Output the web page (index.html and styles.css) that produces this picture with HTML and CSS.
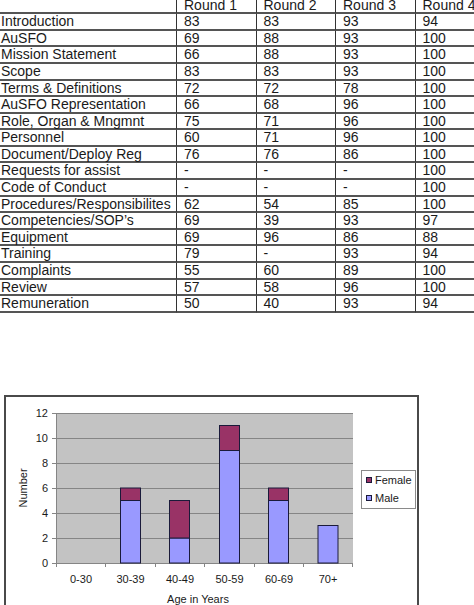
FILE: index.html
```html
<!DOCTYPE html>
<html lang="en">
<head>
    <meta charset="UTF-8">
    <meta name="viewport" content="width=device-width, initial-scale=1.0">
    <title>Review Scores and Age Profile</title>
    <link rel="stylesheet" href="styles.css">
</head>
<body>
    <!-- Scores by round -->
    <table class="scores">
        <colgroup>
            <col class="col-topic">
            <col class="col-round">
            <col class="col-round">
            <col class="col-round">
            <col class="col-round">
        </colgroup>
        <thead>
            <tr><th></th><th>Round 1</th><th>Round 2</th><th>Round 3</th><th>Round 4</th></tr>
        </thead>
        <tbody>
            <tr><td>Introduction</td><td>83</td><td>83</td><td>93</td><td>94</td></tr>
            <tr><td>AuSFO</td><td>69</td><td>88</td><td>93</td><td>100</td></tr>
            <tr><td>Mission Statement</td><td>66</td><td>88</td><td>93</td><td>100</td></tr>
            <tr><td>Scope</td><td>83</td><td>83</td><td>93</td><td>100</td></tr>
            <tr><td>Terms &amp; Definitions</td><td>72</td><td>72</td><td>78</td><td>100</td></tr>
            <tr><td>AuSFO Representation</td><td>66</td><td>68</td><td>96</td><td>100</td></tr>
            <tr><td>Role, Organ &amp; Mngmnt</td><td>75</td><td>71</td><td>96</td><td>100</td></tr>
            <tr><td>Personnel</td><td>60</td><td>71</td><td>96</td><td>100</td></tr>
            <tr><td>Document/Deploy Reg</td><td>76</td><td>76</td><td>86</td><td>100</td></tr>
            <tr><td>Requests for assist</td><td>-</td><td>-</td><td>-</td><td>100</td></tr>
            <tr><td>Code of Conduct</td><td>-</td><td>-</td><td>-</td><td>100</td></tr>
            <tr><td>Procedures/Responsibilites</td><td>62</td><td>54</td><td>85</td><td>100</td></tr>
            <tr><td>Competencies/SOP’s</td><td>69</td><td>39</td><td>93</td><td>97</td></tr>
            <tr><td>Equipment</td><td>69</td><td>96</td><td>86</td><td>88</td></tr>
            <tr><td>Training</td><td>79</td><td>-</td><td>93</td><td>94</td></tr>
            <tr><td>Complaints</td><td>55</td><td>60</td><td>89</td><td>100</td></tr>
            <tr><td>Review</td><td>57</td><td>58</td><td>96</td><td>100</td></tr>
            <tr><td>Remuneration</td><td>50</td><td>40</td><td>93</td><td>94</td></tr>
        </tbody>
    </table>

    <!-- Age chart -->
    <div class="chart">
        <svg width="416" height="210" viewBox="4 395 416 210">
            <rect class="frame" x="5" y="396" width="413" height="240"/>

            <rect class="plot" x="56" y="413" width="297" height="150"/>
            <g class="grid">
                <line x1="52" y1="413.5" x2="353" y2="413.5"/>
                <line x1="52" y1="438.5" x2="353" y2="438.5"/>
                <line x1="52" y1="463.5" x2="353" y2="463.5"/>
                <line x1="52" y1="488.5" x2="353" y2="488.5"/>
                <line x1="52" y1="513.5" x2="353" y2="513.5"/>
                <line x1="52" y1="538.5" x2="353" y2="538.5"/>
                <line x1="52" y1="563.5" x2="353" y2="563.5"/>
                <line x1="56.5" y1="413" x2="56.5" y2="567"/>
                <line x1="105.5" y1="563" x2="105.5" y2="567"/>
                <line x1="155.5" y1="563" x2="155.5" y2="567"/>
                <line x1="204.5" y1="563" x2="204.5" y2="567"/>
                <line x1="254.5" y1="563" x2="254.5" y2="567"/>
                <line x1="303.5" y1="563" x2="303.5" y2="567"/>
                <line x1="352.5" y1="563" x2="352.5" y2="567"/>
            </g>

            <g class="bars">
                <rect class="male" x="120.5" y="500.5" width="20" height="62.5"/>
                <rect class="female" x="120.5" y="488" width="20" height="12.5"/>
                <rect class="male" x="169.5" y="538" width="20" height="25"/>
                <rect class="female" x="169.5" y="500.5" width="20" height="37.5"/>
                <rect class="male" x="219.5" y="450.5" width="20" height="112.5"/>
                <rect class="female" x="219.5" y="425.5" width="20" height="25"/>
                <rect class="male" x="268.5" y="500.5" width="20" height="62.5"/>
                <rect class="female" x="268.5" y="488" width="20" height="12.5"/>
                <rect class="male" x="318" y="525.5" width="20" height="37.5"/>
            </g>

            <g class="labels">
                <text x="48" y="417" text-anchor="end">12</text>
                <text x="48" y="442" text-anchor="end">10</text>
                <text x="48" y="467" text-anchor="end">8</text>
                <text x="48" y="492" text-anchor="end">6</text>
                <text x="48" y="517" text-anchor="end">4</text>
                <text x="48" y="542" text-anchor="end">2</text>
                <text x="48" y="567" text-anchor="end">0</text>

                <text x="81" y="583" text-anchor="middle">0-30</text>
                <text x="130.5" y="583" text-anchor="middle">30-39</text>
                <text x="180" y="583" text-anchor="middle">40-49</text>
                <text x="229.5" y="583" text-anchor="middle">50-59</text>
                <text x="279" y="583" text-anchor="middle">60-69</text>
                <text x="328" y="583" text-anchor="middle">70+</text>

                <text x="198" y="603" text-anchor="middle">Age in Years</text>
                <text x="27" y="488" text-anchor="middle" transform="rotate(-90 27 488)">Number</text>
            </g>

            <g class="legend">
                <rect class="legend-box" x="361.5" y="470.5" width="54" height="38"/>
                <rect class="female" x="366.5" y="477.5" width="5" height="5"/>
                <text x="375" y="484">Female</text>
                <rect class="male" x="366.5" y="495.5" width="5" height="5"/>
                <text x="375" y="502">Male</text>
            </g>
        </svg>
    </div>
</body>
</html>
```

FILE: styles.css
```css
* {
    margin: 0;
    padding: 0;
    box-sizing: border-box;
}

html, body {
    overflow: hidden;
}

body {
    background-color: #fff;
    color: #1a1a1a;
    font-family: "Liberation Sans", Arial, sans-serif;
}

/* Scores table */
.scores {
    width: 500px;
    margin: -2.3px 0 0 -6px;
    border-collapse: separate;
    border-spacing: 0;
    table-layout: fixed;
    font-size: 14px;
}

.col-topic {
    width: 182px;
}

.col-round {
    width: 79.5px;
}

.scores th,
.scores td {
    height: 16.58px;
    padding: 0 0 0 7px;
    line-height: 14.58px;
    font-weight: normal;
    text-align: left;
    white-space: nowrap;
    border-bottom: 2px solid #555;
}

.scores th + th,
.scores td + td {
    border-left: 1px solid #333;
}

/* Age chart */
.chart {
    margin: 82px 0 0 4px;
    width: 416px;
    height: 210px;
}

.chart svg {
    display: block;
}

.frame {
    fill: #fff;
    stroke: #4a4a4a;
    stroke-width: 2;
}

.plot {
    fill: #c3c3c3;
}

.grid line {
    stroke: #858585;
    stroke-width: 1;
}

.bars rect,
.legend .male,
.legend .female {
    stroke: #1a1a3a;
    stroke-width: 1;
}

.male {
    fill: #9999ff;
}

.female {
    fill: #993366;
}

.labels text,
.legend text {
    font-family: "Liberation Sans", Arial, sans-serif;
    font-size: 11px;
    fill: #1a1a1a;
}

.legend-box {
    fill: #fff;
    stroke: #8a8a8a;
    stroke-width: 1;
}
```
